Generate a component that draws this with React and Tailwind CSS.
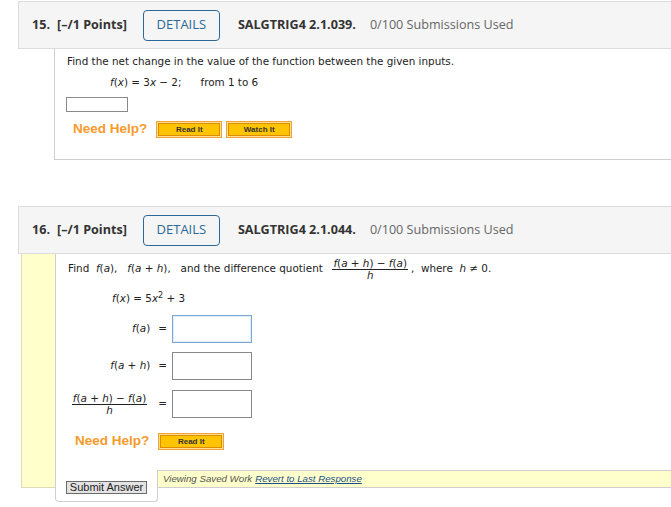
import React from "react";

const body = { fontFamily: '"DejaVu Sans", Verdana, sans-serif' };
const head = { fontFamily: '"Open Sans", sans-serif' };
const arial = { fontFamily: '"Liberation Sans", Arial, sans-serif' };

function Header({ num, code }) {
  return (
    <div
      className="flex h-[48px] items-center border border-r-0 border-[#dcdcdc] bg-[#f5f5f5] pl-[13px] text-[12.6px] text-[#333]"
      style={head}
    >
      <span className="font-bold">{num}.</span>
      <span className="ml-[7px] font-bold">[–/1 Points]</span>
      <span className="ml-[16px] flex h-[31px] w-[77px] items-center justify-center rounded-[4px] border border-[#2b6898] text-[13px] text-[#2b6898]">
        DETAILS
      </span>
      <span className="ml-[18px] font-bold">{code}</span>
      <span className="ml-[14px] text-[#666]">0/100 Submissions Used</span>
    </div>
  );
}

function HelpButton({ label }) {
  return (
    <span className="flex h-[17px] w-[66px] border border-[#eea238] bg-[#ffdf94] p-[1px]">
      <span
        className="flex flex-1 items-center justify-center border border-[#e08c00] bg-[#ffc400] text-[8px] font-bold leading-none text-[#333]"
        style={arial}
      >
        {label}
      </span>
    </span>
  );
}

function NeedHelp({ buttons }) {
  return (
    <div className="flex h-[17px] items-center">
      <span className="text-[13.5px] font-bold text-[#f89a2a]" style={arial}>
        Need Help?
      </span>
      <div className="ml-[9px] flex gap-[4px]">
        {buttons.map((b) => (
          <HelpButton key={b} label={b} />
        ))}
      </div>
    </div>
  );
}

function Frac({ children, den }) {
  return (
    <span className="mx-[3px] inline-flex flex-col items-center align-middle whitespace-pre">
      <span className="border-b border-[#222] px-[1px] leading-[12px]">{children}</span>
      <span className="leading-[11px]">{den}</span>
    </span>
  );
}

const FaH = () => (
  <>
    <i>f</i>(<i>a</i> + <i>h</i>)
  </>
);
const Fa = () => (
  <>
    <i>f</i>(<i>a</i>)
  </>
);

function AnswerRow({ label, focused, className }) {
  return (
    <div className={"flex items-center " + (className || "")}>
      <div className="flex w-[99px] items-center justify-end">
        <span className="whitespace-pre">{label}</span>
        <span className="ml-[8px]">=</span>
      </div>
      <span
        className={
          "ml-[5px] h-[28px] w-[80px] border " +
          (focused
            ? "border-[#7ba7d6] shadow-[inset_0_0_0_1px_#e1edf9]"
            : "border-[#888]")
        }
      />
    </div>
  );
}

export default function App() {
  return (
    <div className="h-[507px] w-[671px] overflow-hidden bg-white pt-[1px] text-[10.4px] text-[#222]" style={body}>
      {/* question 15 */}
      <div className="pl-[18px]">
        <Header num="15" code="SALGTRIG4 2.1.039." />
        <div className="ml-[36px] h-[111px] border-b border-l border-[#cfcfcf] pl-[12px] pt-[6px]">
          <p className="leading-[13px]">
            Find the net change in the value of the function between the given inputs.
          </p>
          <p className="ml-[43px] mt-[8px] leading-[13px]">
            <i>f</i>(<i>x</i>) = 3<i>x</i> − 2;<span className="ml-[19px]">from 1 to 6</span>
          </p>
          <div className="-ml-px mt-[8px] h-[15px] w-[62px] border border-[#8a8a8a]" />
          <div className="ml-[6px] mt-[9px]">
            <NeedHelp buttons={["Read It", "Watch It"]} />
          </div>
        </div>
      </div>

      {/* question 16 */}
      <div className="mt-[46px] pl-[18px]">
        <Header num="16" code="SALGTRIG4 2.1.044." />
        <div className="flex">
          <div className="ml-[3px] mb-[14px] w-[34px] border-b border-l border-[#dedbb8] bg-[#ffffcc]" />
          <div className="flex-1">
            <div className="border-l border-[#cfcfcf] pl-[12px] pt-[4px]">
              <p className="flex h-[22px] items-center whitespace-pre">
                <span>Find  </span>
                <Fa />
                <span>,   </span>
                <FaH />
                <span>,   and the difference quotient  </span>
                <Frac den={<i>h</i>}>
                  <FaH /> − <Fa />
                </Frac>
                <span>,  where  </span>
                <i>h</i>
                <span> ≠ 0.</span>
              </p>
              <p className="ml-[44px] mt-[12px] leading-[13px]">
                <i>f</i>(<i>x</i>) = 5<i>x</i>
                <sup className="text-[8px]">2</sup> + 3
              </p>
              <AnswerRow className="mt-[10px]" focused label={<Fa />} />
              <AnswerRow className="mt-[9px]" label={<FaH />} />
              <AnswerRow
                className="mt-[10px]"
                label={
                  <Frac den={<i>h</i>}>
                    <FaH /> − <Fa />
                  </Frac>
                }
              />
              <div className="ml-[7px] mt-[15px] pb-[20px]">
                <NeedHelp buttons={["Read It"]} />
              </div>
            </div>
            <div className="flex items-start">
              <div className="h-[32px] w-[103px] rounded-b-[4px] border border-t-0 border-[#cfcfcf] pl-[10px] pt-[11px]">
                <span
                  className="flex h-[13px] w-[81px] items-center justify-center border border-[#6b6b6b] bg-[#e3e3e3] text-[11px] text-[#222]"
                  style={arial}
                >
                  Submit Answer
                </span>
              </div>
              <div
                className="-ml-px flex h-[18px] flex-1 items-center border-y border-l border-[#cfcfcf] bg-[#ffffcc] pl-[5px] text-[9.7px] italic text-[#555]"
                style={arial}
              >
                Viewing Saved Work
                <span className="ml-[3px] text-[#1d4f87] underline">Revert to Last Response</span>
              </div>
            </div>
          </div>
        </div>
      </div>
    </div>
  );
}
